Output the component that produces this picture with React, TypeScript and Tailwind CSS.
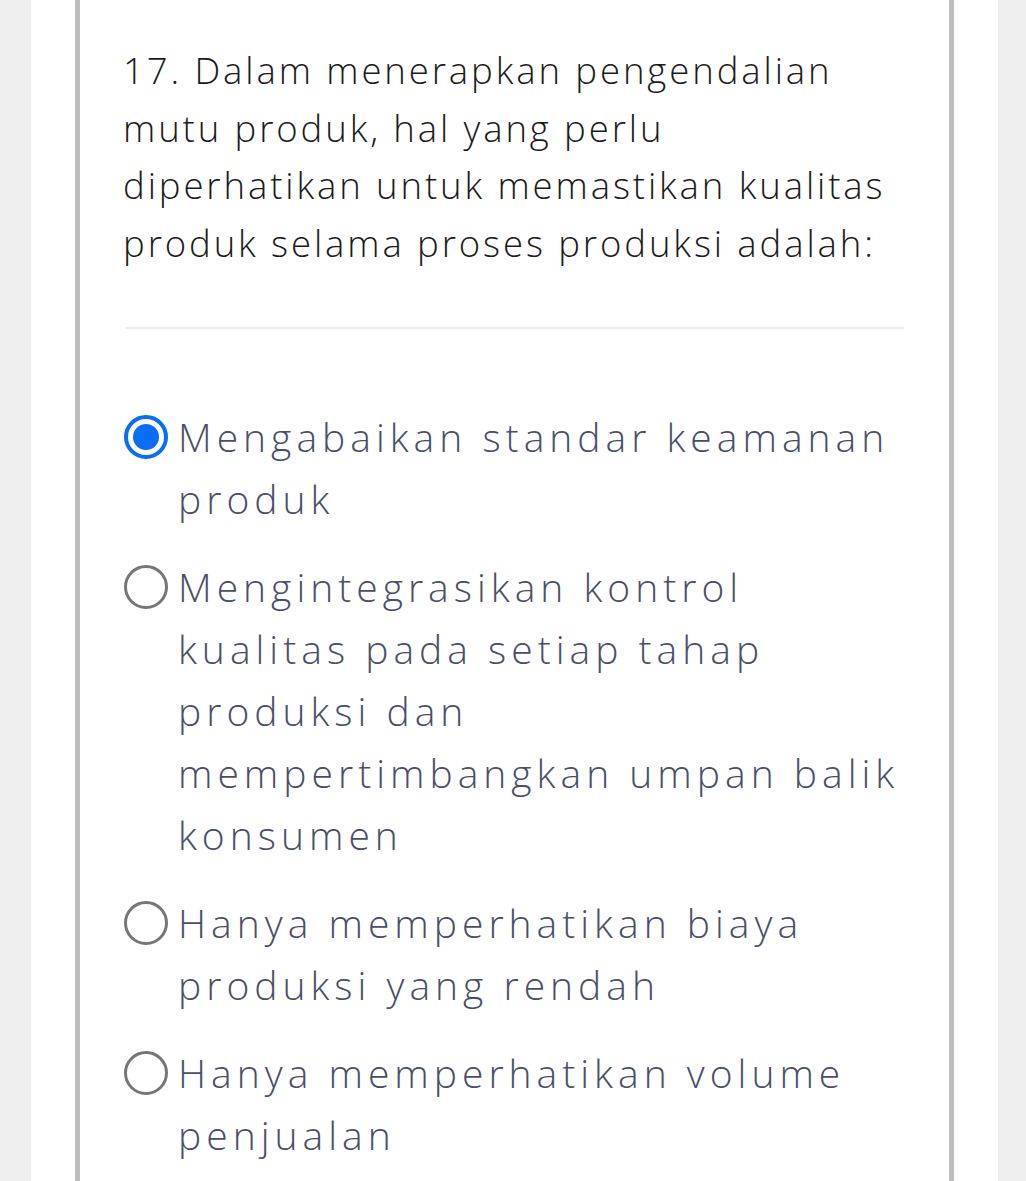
const question = [
  '17. Dalam menerapkan pengendalian',
  'mutu produk, hal yang perlu',
  'diperhatikan untuk memastikan kualitas',
  'produk selama proses produksi adalah:',
];

const options = [
  { lines: ['Mengabaikan standar keamanan', 'produk'], selected: true },
  {
    lines: [
      'Mengintegrasikan kontrol',
      'kualitas pada setiap tahap',
      'produksi dan',
      'mempertimbangkan umpan balik',
      'konsumen',
    ],
    selected: false,
  },
  { lines: ['Hanya memperhatikan biaya', 'produksi yang rendah'], selected: false },
  { lines: ['Hanya memperhatikan volume', 'penjualan'], selected: false },
];

function Radio({ selected }: { selected: boolean }) {
  if (selected) {
    return (
      <span className="flex h-[44px] w-[44px] shrink-0 items-center justify-center rounded-full border-[4px] border-[#0b6cf4] bg-white">
        <span className="block h-[26px] w-[26px] rounded-full bg-[#0b6cf4]" />
      </span>
    );
  }
  return <span className="block h-[44px] w-[44px] shrink-0 rounded-full border-[3px] border-[#767676] bg-white" />;
}

export default function App() {
  return (
    <div className="flex h-[1181px] w-full overflow-hidden bg-[#efefef] pl-[31px] pr-[28px] font-['Open_Sans',_'Noto_Sans',_sans-serif]">
      <div className="flex-1 bg-white px-[44px]">
        <div className="h-full border-x-[5px] border-[#bdbdbd] px-[45px] pt-[42px]">
          <h1 className="-ml-[2px] text-[36.5px] font-light leading-[57.5px] tracking-[2.9px] text-[#1b1b1b]">
            {question.map((line) => (
              <span key={line} className="block whitespace-nowrap">
                {line}
              </span>
            ))}
          </h1>
          <hr className="mt-[55px] border-t-2 border-[#eeeeee]" />
          <ul className="mt-[77px] flex flex-col gap-[26px]">
            {options.map((option) => (
              <li key={option.lines[0]} className="-ml-[1px] flex gap-[10px]">
                <div className="pt-[9px]">
                  <Radio selected={option.selected} />
                </div>
                <p className="text-[39px] font-light leading-[62px] tracking-[5px] text-[#4b4f66]">
                  {option.lines.map((line) => (
                    <span key={line} className="block whitespace-nowrap">
                      {line}
                    </span>
                  ))}
                </p>
              </li>
            ))}
          </ul>
        </div>
      </div>
    </div>
  );
}
